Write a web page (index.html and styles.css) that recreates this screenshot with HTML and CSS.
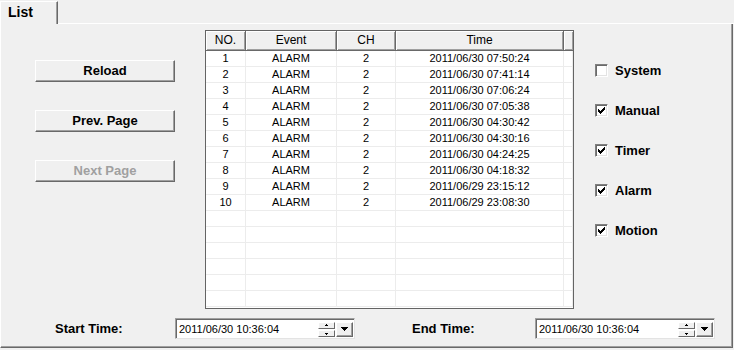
FILE: index.html
```html
<!DOCTYPE html>
<html>
<head>
<meta charset="utf-8">
<link rel="stylesheet" href="styles.css">
</head>
<body>
<div class="tabbar">
  <div class="tab">List</div>
  <div class="tab-rest"></div>
</div>
<div class="panel">
  <div class="main">
    <div class="buttons">
      <button class="btn">Reload</button>
      <button class="btn">Prev. Page</button>
      <button class="btn" disabled>Next Page</button>
    </div>
    <div class="list">
      <div class="row head"><div class="c">NO.</div><div class="c">Event</div><div class="c">CH</div><div class="c">Time</div><div class="c"></div></div>
      <div class="row"><div class="c">1</div><div class="c">ALARM</div><div class="c">2</div><div class="c">2011/06/30 07:50:24</div><div class="c"></div></div>
      <div class="row"><div class="c">2</div><div class="c">ALARM</div><div class="c">2</div><div class="c">2011/06/30 07:41:14</div><div class="c"></div></div>
      <div class="row"><div class="c">3</div><div class="c">ALARM</div><div class="c">2</div><div class="c">2011/06/30 07:06:24</div><div class="c"></div></div>
      <div class="row"><div class="c">4</div><div class="c">ALARM</div><div class="c">2</div><div class="c">2011/06/30 07:05:38</div><div class="c"></div></div>
      <div class="row"><div class="c">5</div><div class="c">ALARM</div><div class="c">2</div><div class="c">2011/06/30 04:30:42</div><div class="c"></div></div>
      <div class="row"><div class="c">6</div><div class="c">ALARM</div><div class="c">2</div><div class="c">2011/06/30 04:30:16</div><div class="c"></div></div>
      <div class="row"><div class="c">7</div><div class="c">ALARM</div><div class="c">2</div><div class="c">2011/06/30 04:24:25</div><div class="c"></div></div>
      <div class="row"><div class="c">8</div><div class="c">ALARM</div><div class="c">2</div><div class="c">2011/06/30 04:18:32</div><div class="c"></div></div>
      <div class="row"><div class="c">9</div><div class="c">ALARM</div><div class="c">2</div><div class="c">2011/06/29 23:15:12</div><div class="c"></div></div>
      <div class="row"><div class="c">10</div><div class="c">ALARM</div><div class="c">2</div><div class="c">2011/06/29 23:08:30</div><div class="c"></div></div>
      <div class="row"><div class="c"></div><div class="c"></div><div class="c"></div><div class="c"></div><div class="c"></div></div>
      <div class="row"><div class="c"></div><div class="c"></div><div class="c"></div><div class="c"></div><div class="c"></div></div>
      <div class="row"><div class="c"></div><div class="c"></div><div class="c"></div><div class="c"></div><div class="c"></div></div>
      <div class="row"><div class="c"></div><div class="c"></div><div class="c"></div><div class="c"></div><div class="c"></div></div>
      <div class="row"><div class="c"></div><div class="c"></div><div class="c"></div><div class="c"></div><div class="c"></div></div>
      <div class="row"><div class="c"></div><div class="c"></div><div class="c"></div><div class="c"></div><div class="c"></div></div>
    </div>
    <div class="checks">
      <div class="check"><span class="box"></span><span class="lbl">System</span></div>
      <div class="check"><span class="box"><svg class="tick" width="7" height="7" viewBox="0 0 7 7" shape-rendering="crispEdges"><path d="M6 0h1v1h-1zM5 1h2v1h-2zM0 2h1v1h-1zM4 2h3v1h-3zM0 3h2v1h-2zM3 3h3v1h-3zM0 4h5v1h-5zM1 5h3v1h-3zM2 6h1v1h-1z" fill="#000"/></svg></span><span class="lbl">Manual</span></div>
      <div class="check"><span class="box"><svg class="tick" width="7" height="7" viewBox="0 0 7 7" shape-rendering="crispEdges"><path d="M6 0h1v1h-1zM5 1h2v1h-2zM0 2h1v1h-1zM4 2h3v1h-3zM0 3h2v1h-2zM3 3h3v1h-3zM0 4h5v1h-5zM1 5h3v1h-3zM2 6h1v1h-1z" fill="#000"/></svg></span><span class="lbl">Timer</span></div>
      <div class="check"><span class="box"><svg class="tick" width="7" height="7" viewBox="0 0 7 7" shape-rendering="crispEdges"><path d="M6 0h1v1h-1zM5 1h2v1h-2zM0 2h1v1h-1zM4 2h3v1h-3zM0 3h2v1h-2zM3 3h3v1h-3zM0 4h5v1h-5zM1 5h3v1h-3zM2 6h1v1h-1z" fill="#000"/></svg></span><span class="lbl">Alarm</span></div>
      <div class="check"><span class="box"><svg class="tick" width="7" height="7" viewBox="0 0 7 7" shape-rendering="crispEdges"><path d="M6 0h1v1h-1zM5 1h2v1h-2zM0 2h1v1h-1zM4 2h3v1h-3zM0 3h2v1h-2zM3 3h3v1h-3zM0 4h5v1h-5zM1 5h3v1h-3zM2 6h1v1h-1z" fill="#000"/></svg></span><span class="lbl">Motion</span></div>
    </div>
  </div>
  <div class="bottom">
    <span class="blabel start">Start Time:</span>
    <div class="field">
      <span class="ftext">2011/06/30 10:36:04</span>
      <span class="spin"><span class="sb"><svg width="5" height="3" viewBox="0 0 5 3" shape-rendering="crispEdges"><path d="M2 0h1v1h-1zM1 1h3v1h-3z" fill="#000"/></svg></span><span class="sb"><svg width="5" height="3" viewBox="0 0 5 3" shape-rendering="crispEdges"><path d="M1 1h3v1h-3zM2 2h1v1h-1z" fill="#000"/></svg></span></span>
      <span class="drop"><svg width="7" height="4" viewBox="0 0 7 4" shape-rendering="crispEdges"><path d="M0 0h7v1h-7zM1 1h5v1h-5zM2 2h3v1h-3zM3 3h1v1h-1z" fill="#000"/></svg></span>
    </div>
    <span class="blabel end">End Time:</span>
    <div class="field">
      <span class="ftext">2011/06/30 10:36:04</span>
      <span class="spin"><span class="sb"><svg width="5" height="3" viewBox="0 0 5 3" shape-rendering="crispEdges"><path d="M2 0h1v1h-1zM1 1h3v1h-3z" fill="#000"/></svg></span><span class="sb"><svg width="5" height="3" viewBox="0 0 5 3" shape-rendering="crispEdges"><path d="M1 1h3v1h-3zM2 2h1v1h-1z" fill="#000"/></svg></span></span>
      <span class="drop"><svg width="7" height="4" viewBox="0 0 7 4" shape-rendering="crispEdges"><path d="M0 0h7v1h-7zM1 1h5v1h-5zM2 2h3v1h-3zM3 3h1v1h-1z" fill="#000"/></svg></span>
    </div>
  </div>
</div>
</body>
</html>
```
FILE: styles.css
```css
* { box-sizing: border-box; }
html, body {
  margin: 0;
  padding: 0;
  background: #f0f0f0;
  width: 734px;
  height: 350px;
  overflow: hidden;
  font-family: "Liberation Sans", Arial, sans-serif;
  color: #000;
}
.tabbar {
  display: flex;
  height: 24px;
  padding-top: 1px;
}
.tab {
  width: 58px;
  height: 23px;
  border-top: 1px solid #fff;
  border-left: 1px solid #fff;
  border-right: 1px solid #696969;
  box-shadow: inset -1px 0 #a0a0a0;
  font-weight: bold;
  font-size: 14px;
  line-height: 20px;
  padding-left: 7px;
}
.tab-rest {
  flex: 1;
  border-bottom: 1px solid #fff;
}
.panel {
  width: 733px;
  height: 324px;
  border-left: 1px solid #fff;
  border-right: 1px solid #696969;
  border-bottom: 1px solid #696969;
  box-shadow: inset -1px -1px #a0a0a0;
  display: flex;
  flex-direction: column;
}
.main {
  display: flex;
  align-items: flex-start;
  padding-top: 6px;
  height: 294px;
}
.buttons {
  display: flex;
  flex-direction: column;
  gap: 28px;
  margin-left: 34px;
  margin-top: 30px;
  width: 140px;
}
.btn {
  display: block;
  width: 140px;
  height: 22px;
  margin: 0;
  padding: 0;
  background: #f0f0f0;
  border: 1px solid;
  border-color: #fff #696969 #696969 #fff;
  box-shadow: inset -1px -1px #a0a0a0;
  font-family: "Liberation Sans", Arial, sans-serif;
  font-weight: bold;
  font-size: 13px;
  color: #000;
  line-height: 18px;
  padding-bottom: 1px;
}
.btn:disabled {
  color: #a0a0a0;
}
.list {
  margin-left: 30px;
  width: 369px;
  height: 279px;
  border: 1px solid #646464;
  background: #fff;
  overflow: hidden;
  font-size: 11px;
}
.row {
  display: grid;
  grid-template-columns: 40px 91px 59px 168px 9px;
  height: 16px;
}
.row .c {
  border-right: 1px solid #ececec;
  border-bottom: 1px solid #ececec;
  text-align: center;
  line-height: 15px;
  white-space: nowrap;
}
.row.head {
  height: 20px;
}
.row.head .c {
  background: #f0f0f0;
  border-right: 1px solid #696969;
  border-bottom: 1px solid #696969;
  box-shadow: inset 1px 1px #fff, inset -1px -1px #a0a0a0;
  line-height: 19px;
  font-size: 12px;
}
.row.head .c:last-child {
  border-right: none;
}
.checks {
  margin-left: 21px;
  margin-top: 34px;
  display: flex;
  flex-direction: column;
  gap: 27px;
}
.check {
  display: flex;
  align-items: center;
  height: 13px;
}
.box {
  width: 13px;
  height: 13px;
  background: #fff;
  border: 1px solid;
  border-color: #808080 #fff #fff #808080;
  box-shadow: inset 1px 1px #6a6a6a, inset -1px -1px #e3e3e3;
  position: relative;
}
.tick {
  position: absolute;
  left: 2px;
  top: 2px;
}
.lbl {
  margin-left: 7px;
  font-weight: bold;
  font-size: 13px;
  line-height: 13px;
}
.bottom {
  display: flex;
  align-items: center;
  height: 21px;
}
.blabel {
  font-weight: bold;
  font-size: 13px;
}
.start {
  margin-left: 54px;
  width: 120px;
}
.end {
  margin-left: 57px;
  width: 123px;
}
.field {
  width: 180px;
  height: 21px;
  background: #fff;
  border: 1px solid;
  border-color: #a0a0a0 #e3e3e3 #e3e3e3 #a0a0a0;
  box-shadow: inset 1px 1px #696969;
  display: flex;
  align-items: center;
  padding-left: 3px;
  padding-right: 1px;
}
.ftext {
  font-size: 11px;
  flex: 1;
  padding-top: 1px;
}
.spin {
  display: flex;
  flex-direction: column;
  gap: 1px;
  margin-top: 1px;
}
.sb {
  width: 17px;
  height: 7px;
  background: #f0f0f0;
  border: 1px solid;
  border-color: #fff #696969 #696969 #fff;
  display: flex;
  align-items: center;
  justify-content: center;
}
.sb svg { display: block; }
.drop {
  width: 17px;
  height: 15px;
  margin-left: 1px;
  margin-top: 1px;
  background: #f0f0f0;
  border: 1px solid;
  border-color: #fff #696969 #696969 #fff;
  box-shadow: inset -1px -1px #a0a0a0;
  display: flex;
  align-items: center;
  justify-content: center;
}
.drop svg { display: block; }
```
